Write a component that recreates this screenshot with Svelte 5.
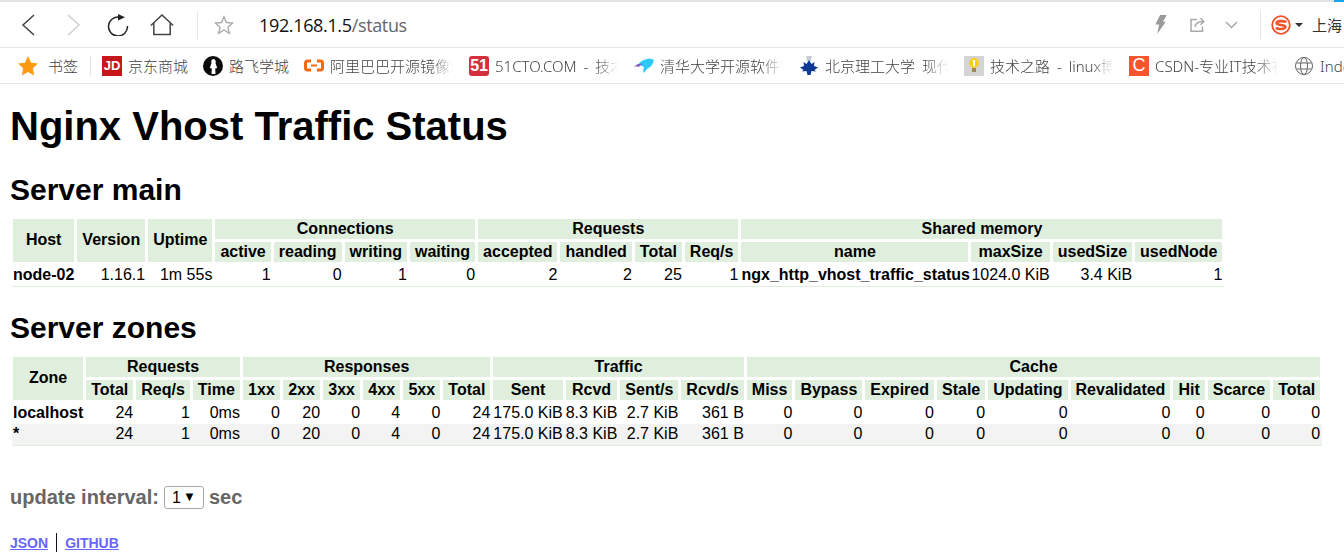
<script>
    // Bookmark bar entries; "cut" ones are clipped with a fade at the right edge
    const bookmarks = [
        { icon: "jd", label: "京东商城" },
        { icon: "luffy", label: "路飞学城" },
        { icon: "ali", label: "阿里巴巴开源镜像站", cut: true },
        { icon: "cto", label: "51CTO.COM - 技术成就梦想", cut: true },
        { icon: "fish", label: "清华大学开源软件镜像站", cut: true },
        { icon: "bit", label: "北京理工大学 现代远程教育", cut: true },
        { icon: "bulb", label: "技术之路 - linux博客园", cut: true },
        { icon: "csdn", label: "CSDN-专业IT技术社区", cut: true },
        { icon: "globe", label: "Index" },
    ];

    const mainGroups = [
        { name: "Connections", cols: ["active", "reading", "writing", "waiting"] },
        { name: "Requests", cols: ["accepted", "handled", "Total", "Req/s"] },
        { name: "Shared memory", cols: ["name", "maxSize", "usedSize", "usedNode"] },
    ];
    const mainRow = ["1.16.1", "1m 55s", "1", "0", "1", "0", "2", "2", "25", "1"];

    const zoneGroups = [
        { name: "Requests", cols: ["Total", "Req/s", "Time"] },
        { name: "Responses", cols: ["1xx", "2xx", "3xx", "4xx", "5xx", "Total"] },
        { name: "Traffic", cols: ["Sent", "Rcvd", "Sent/s", "Rcvd/s"] },
        {
            name: "Cache",
            cols: ["Miss", "Bypass", "Expired", "Stale", "Updating", "Revalidated", "Hit", "Scarce", "Total"],
        },
    ];
    const zoneCells = [
        "24", "1", "0ms", "0", "20", "0", "4", "0", "24",
        "175.0 KiB", "8.3 KiB", "2.7 KiB", "361 B",
        "0", "0", "0", "0", "0", "0", "0", "0", "0",
    ];
    const zones = ["localhost", "*"];
</script>

<div class="browser">
    <div class="strip"><span class="strip-blue"></span></div>

    <div class="toolbar">
        <div class="nav">
            <svg class="back" width="16" height="24" viewBox="0 0 16 24"><path d="M14 2 3 12l11 10" /></svg>
            <svg class="forward" width="16" height="24" viewBox="0 0 16 24"><path d="M2 2l11 10L2 22" /></svg>
            <svg class="reload" width="22" height="22" viewBox="0 0 22 22">
                <path d="M13 3.200A9.500 9.500 0 1 0 20.500 12" />
                <path class="fill" d="M11 0l7 3.200-7 3.200z" />
            </svg>
            <svg class="home" width="24" height="22" viewBox="0 0 24 22">
                <path d="M.8 11.500 12 1l11.200 10.500M3.800 9v11.500h16.400V9" />
            </svg>
        </div>
        <span class="vsep"></span>
        <svg class="fav" width="20" height="20" viewBox="0 0 22 22">
            <path d="M11 2l2.700 6.300 6.800.6-5.200 4.500 1.600 6.700L11 16.500l-5.900 3.600 1.600-6.700L1.500 8.900l6.800-.6z" />
        </svg>
        <div class="url">192.168.1.5<span class="path">/status</span></div>
        <div class="tools">
            <svg width="12" height="19" viewBox="0 0 12 20"><path class="bolt" d="M5 0h7L8 7h3L2 20l2-10H0z" /></svg>
            <svg class="share" width="15" height="15" viewBox="0 0 15 15">
                <path d="M7 2.500H1v11.700h11.500V9.500M5 10c.5-3.500 3-5.500 8-5.500M10.500 1.200l3.300 3.300-3.300 3.300" />
            </svg>
            <svg class="share" width="13" height="8" viewBox="0 0 13 8"><path d="M1 1l5.500 5.500L12 1" /></svg>
            <span class="vsep"></span>
            <svg class="sogou" width="20" height="20" viewBox="0 0 20 20">
                <circle cx="10" cy="10" r="8.800" />
                <path d="M15 7.400C14 5.800 5.800 5.500 5.600 8c-.2 2.500 9 1.500 8.800 4-.2 2.600-7.500 2.500-9.400.7" />
            </svg>
            <span class="caret"></span>
            <span class="city">上海</span>
        </div>
    </div>

    <div class="bookmarks">
        <svg class="bm-star" width="20" height="20" viewBox="0 0 20 20">
            <path fill="#fb9a0e" d="M10 0l3 6.700 7 .8-5.200 4.800 1.400 7.200L10 16l-6.200 3.500 1.400-7.200L0 7.500l7-.8z" />
        </svg>
        <span class="bm-label first">书签</span>
        <span class="bm-sep"></span>
        {#each bookmarks as b}
            <div class="bm" class:long={b.cut}>
                <span class="favicon">
                    {#if b.icon === "jd"}
                        <span class="tile jd">JD</span>
                    {:else if b.icon === "luffy"}
                        <svg width="20" height="20" viewBox="0 0 20 20">
                            <circle cx="10" cy="10" r="10" fill="#0c0c0c" />
                            <path fill="#fff" d="M10 3a2.800 2.800 0 0 1 2.500 4l1.700 5-2 .4.300 5.600H8.500l.3-5.600-2-.4 1.700-5A2.800 2.800 0 0 1 10 3z" />
                        </svg>
                    {:else if b.icon === "ali"}
                        <svg width="20" height="20" viewBox="0 0 20 20">
                            <path fill="none" stroke="#fb6a0a" stroke-width="3" d="M7 5H3.500Q1.500 5 1.500 7v5q0 2 2 2H7M13 5h3.500q2 0 2 2v5q0 2-2 2H13" />
                            <path stroke="#fb6a0a" stroke-width="2" d="M7 9.500h6" />
                        </svg>
                    {:else if b.icon === "cto"}
                        <span class="tile cto">51</span>
                    {:else if b.icon === "fish"}
                        <svg width="20" height="20" viewBox="0 0 20 20">
                            <path fill="#2ec9fb" d="M4 9c3-5 9-7 14-6 2 .5 2 2 1 4-1 3-4 5-6 6l-3 4c-1-2-1-3 0-6-2-1-4-2-6-2z" />
                            <path fill="#7c5ac8" d="M0 11c2-3 6-4 10-3-3 0-4 1-5 3-2-1-3-1-5 0z" />
                        </svg>
                    {:else if b.icon === "bit"}
                        <svg width="20" height="20" viewBox="0 0 20 20">
                            <path fill="#c9ced6" d="M7 0h6l-1 5H8z" />
                            <path fill="#0f3a94" d="M10 4l2.500 4 3-2-.5 4 4 1.500-3.500 2.500 1.500 1.500-4.500-.5-1 4H8.500l-1-4-4.500.5L4.500 14 1 11.500 5 10l-.5-4 3 2z" />
                        </svg>
                    {:else if b.icon === "bulb"}
                        <span class="tile bulb">
                            <svg width="12" height="18" viewBox="0 0 12 18">
                                <circle cx="6" cy="6" r="5" fill="#f7cf18" />
                                <path fill="#fff" d="M5 3h2v6H5z" />
                                <path fill="#a08a4a" d="M4 11h4v4H4z" />
                            </svg>
                        </span>
                    {:else if b.icon === "csdn"}
                        <span class="tile csdn">C</span>
                    {:else}
                        <svg width="20" height="20" viewBox="0 0 20 20" fill="none" stroke="#666" stroke-width="1">
                            <circle cx="10" cy="10" r="8.500" />
                            <ellipse cx="10" cy="10" rx="3.500" ry="8.500" />
                            <path d="M2.500 7h15M2.500 13h15" />
                        </svg>
                    {/if}
                </span>
                <span class="bm-label" class:cut={b.cut}>{b.label}</span>
            </div>
        {/each}
    </div>
</div>

<main>
    <h1>Nginx Vhost Traffic Status</h1>

    <h2>Server main</h2>
    <table>
        <thead>
            <tr>
                <th rowspan="2">Host</th>
                <th rowspan="2">Version</th>
                <th rowspan="2">Uptime</th>
                {#each mainGroups as g}
                    <th colspan={g.cols.length}>{g.name}</th>
                {/each}
            </tr>
            <tr>
                {#each mainGroups as g}
                    {#each g.cols as c}
                        <th>{c}</th>
                    {/each}
                {/each}
            </tr>
        </thead>
        <tbody>
            <tr class="last">
                <td class="key">node-02</td>
                {#each mainRow as v}
                    <td>{v}</td>
                {/each}
                <td class="key name">ngx_http_vhost_traffic_status</td>
                <td>1024.0 KiB</td>
                <td>3.4 KiB</td>
                <td>1</td>
            </tr>
        </tbody>
    </table>

    <h2>Server zones</h2>
    <table>
        <thead>
            <tr>
                <th rowspan="2">Zone</th>
                {#each zoneGroups as g}
                    <th colspan={g.cols.length}>{g.name}</th>
                {/each}
            </tr>
            <tr>
                {#each zoneGroups as g}
                    {#each g.cols as c}
                        <th class:code={c.endsWith("xx")}>{c}</th>
                    {/each}
                {/each}
            </tr>
        </thead>
        <tbody>
            {#each zones as zone, i}
                <tr class:odd={i % 2 === 1} class:last={i === zones.length - 1}>
                    <td class="key">{zone}</td>
                    {#each zoneCells as v}
                        <td>{v}</td>
                    {/each}
                </tr>
            {/each}
        </tbody>
    </table>

    <div class="interval">
        update interval:
        <span class="select-wrap">
            <select>
                <option>1</option>
                <option>2</option>
                <option>5</option>
            </select>
            <span class="arrow">▼</span>
        </span>
        sec
    </div>

    <div class="links">
        <a href="#json">JSON</a>
        <span class="pipe"></span>
        <a href="#github">GITHUB</a>
    </div>
</main>

<style>
    :global(body) {
        background: #fff;
        color: #000;
        font-family: "Liberation Sans", Arial, sans-serif;
        overflow: hidden;
    }

    /* Browser chrome */
    .strip {
        height: 2px;
        background: #e4e4e4;
        display: flex;
        justify-content: flex-end;
    }

    .strip-blue {
        width: 10px;
        background: #1aa3e8;
    }

    .toolbar {
        height: 45px;
        display: flex;
        align-items: center;
        padding-left: 20px;
        border-bottom: 1px solid #e6e6e6;
    }

    .toolbar svg path {
        fill: none;
        stroke: #444;
        stroke-width: 1.5;
    }

    .nav {
        display: flex;
        align-items: center;
        width: 177px;
    }

    .nav .back {
        margin-right: 30px;
    }

    .nav .forward {
        margin-right: 25px;
    }

    .nav .reload {
        margin-right: 21px;
    }

    .toolbar svg.forward path {
        stroke: #d0d0d0;
    }

    .toolbar svg.reload path {
        stroke: #222;
    }

    .toolbar svg path.fill {
        fill: #222;
        stroke: none;
    }

    .vsep {
        width: 1px;
        height: 28px;
        background: #e6e6e6;
    }

    .fav {
        margin-left: 16px;
    }

    .toolbar svg.fav path {
        stroke: #aaa;
    }

    .url {
        margin-left: 25px;
        font-family: "Open Sans", "Noto Sans", sans-serif;
        font-size: 18px;
        letter-spacing: -0.35px;
        color: #111;
    }

    .path {
        color: #666;
    }

    .tools {
        margin-left: auto;
        display: flex;
        align-items: center;
    }

    .tools > svg:nth-child(1) {
        margin-right: 23px;
    }

    .tools > svg:nth-child(2) {
        margin-right: 20px;
    }

    .tools > svg:nth-child(3) {
        margin-right: 22px;
    }

    .toolbar svg path.bolt {
        fill: #9a9a9a;
        stroke: none;
    }

    .toolbar .tools svg.share path {
        stroke: #aaa;
    }

    .sogou {
        margin-left: 10px;
        fill: none;
        stroke: #f0522a;
    }

    .sogou circle {
        stroke-width: 1.8;
    }

    .toolbar .tools svg.sogou path {
        stroke: #f0522a;
        stroke-width: 2.6;
    }

    .caret {
        margin-left: 4px;
        width: 0;
        height: 0;
        border-left: 4px solid transparent;
        border-right: 4px solid transparent;
        border-top: 4px solid #333;
    }

    .city {
        margin-left: 9px;
        width: 32px;
        overflow: hidden;
        white-space: nowrap;
        font-family: "Noto Sans CJK SC", sans-serif;
        font-size: 15px;
        color: #333;
    }

    .bookmarks {
        height: 35px;
        display: flex;
        align-items: center;
        padding-left: 18px;
        border-bottom: 1px solid #e6e6e6;
        white-space: nowrap;
        overflow: hidden;
    }

    .bookmarks > * {
        flex: none;
    }

    .bm-label {
        font-family: "Noto Sans", "Noto Sans CJK SC", sans-serif;
        font-size: 15px;
        color: #444;
        font-weight: 300;
        word-spacing: 3px;
    }

    .bm-label.first {
        margin-left: 10px;
    }

    .bm-sep {
        width: 1px;
        height: 20px;
        background: #e4e4e4;
        margin: 0 11px 0 12px;
    }

    .bm {
        display: flex;
        align-items: center;
        gap: 6px;
        margin-right: 15px;
    }

    .bm.long {
        margin-right: 16px;
    }

    .favicon {
        width: 20px;
        height: 20px;
        flex: none;
        display: flex;
    }

    .tile {
        width: 20px;
        height: 20px;
        display: flex;
        align-items: center;
        justify-content: center;
        color: #fff;
        font-weight: bold;
        font-family: "Liberation Sans", sans-serif;
    }

    .jd {
        background: #c8161d;
        font-size: 13px;
    }

    .cto {
        background: #d3303c;
        border-radius: 3px;
        font-size: 16px;
        font-weight: bold;
    }

    .bulb {
        background: #d4d4d4;
    }

    .csdn {
        background: #f4552c;
        font-size: 18px;
        font-weight: normal;
    }

    .cut {
        width: 123px;
        overflow: hidden;
        mask-image: linear-gradient(to right, #000 82%, transparent);
    }

    /* Status page */
    main {
        padding: 0 10px;
    }

    h1 {
        font-size: 40px;
        line-height: 46px;
        margin: 19px 0 0;
    }

    h2 {
        font-size: 30px;
        line-height: 34px;
        margin: 24px 0 9px;
    }

    table {
        border-collapse: collapse;
        font-size: 16px;
        white-space: nowrap;
    }

    th {
        background: #dfeedd;
        border: 3px solid #fff;
        padding: 1px 5px;
        font-weight: bold;
    }

    th[rowspan] {
        padding-bottom: 3px;
    }

    th.code {
        padding: 1px 5.200px;
    }

    td {
        padding: 1px 1.500px 2px;
        text-align: right;
    }

    td.key {
        text-align: left;
        font-weight: bold;
    }

    td.name {
        padding-right: 0;
    }

    .odd {
        background: #f3f3f3;
    }

    .last {
        border-bottom: 1px solid #dfeedd;
    }

    .interval {
        margin-top: 40px;
        font-size: 20px;
        font-weight: bold;
        color: #666;
        display: flex;
        align-items: center;
        gap: 5px;
    }

    .select-wrap {
        position: relative;
        display: flex;
    }

    select {
        appearance: none;
        width: 40px;
        height: 23px;
        padding: 0 0 0 7px;
        border: 1px solid #a6a6a6;
        border-radius: 3px;
        background: #fff;
        color: #000;
        font-family: "Liberation Sans", sans-serif;
        font-size: 16px;
    }

    .arrow {
        position: absolute;
        right: 8px;
        top: 3px;
        font-size: 13px;
        font-weight: normal;
        color: #000;
        pointer-events: none;
    }

    .links {
        margin-top: 24px;
        display: flex;
        align-items: center;
        gap: 8px;
        font-size: 14px;
        font-weight: bold;
    }

    .links a {
        color: #6666ff;
    }

    .pipe {
        width: 1px;
        height: 19px;
        background: #112;
    }
</style>
